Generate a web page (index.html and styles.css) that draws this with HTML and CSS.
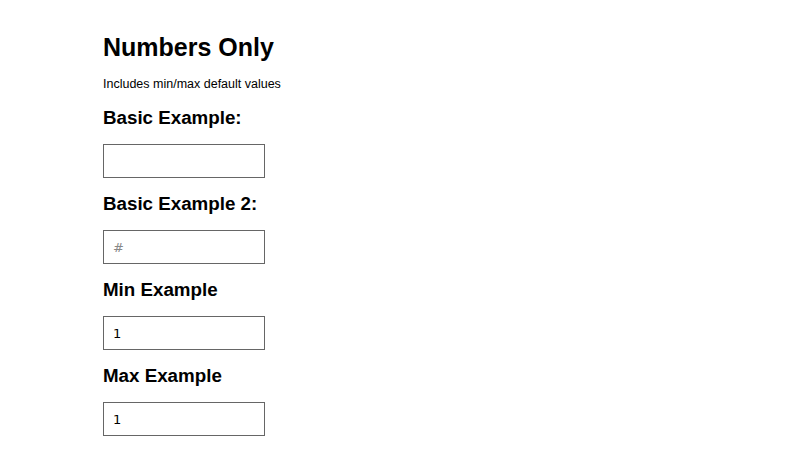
FILE: index.html
```html
<!DOCTYPE html>
<html lang="en">
<head>
    <meta charset="UTF-8">
    <meta name="viewport" content="width=device-width, initial-scale=1.0">
    <title>Numbers Only</title>
    <link rel="stylesheet" href="styles.css">
</head>
<body>

<div class="container">
    <h1>Numbers Only</h1>
    <p class="intro">Includes min/max default values</p>

    <div class="form-group">
        <label for="basic">Basic Example:</label>
        <input type="text" id="basic">
    </div>
    <div class="form-group">
        <label for="basic2">Basic Example 2:</label>
        <input type="text" id="basic2" placeholder="#">
    </div>
    <div class="form-group">
        <label for="min">Min Example</label>
        <input type="text" id="min" value="1">
    </div>
    <div class="form-group">
        <label for="max">Max Example</label>
        <input type="text" id="max" value="1">
    </div>
</div>

</body>
</html>
```

FILE: styles.css
```css
body {
    font-family: "Liberation Sans", Arial, sans-serif;
    font-size: 12.5px;
    margin: 0;
    padding: 0;
    background-color: #fff;
    color: #000;
}

.container {
    padding: 33px 103px 0;
}

h1 {
    font-size: 2em;
    margin: 0;
    line-height: 29px;
}

.intro {
    margin: 14px 0 0;
    line-height: 16px;
}

.form-group {
    margin-top: 15px;
}

label {
    display: block;
    font-size: 1.5em;
    font-weight: bold;
    line-height: 22px;
    margin-bottom: 15px;
}

input[type="text"] {
    display: block;
    width: 162px;
    height: 34px;
    box-sizing: border-box;
    padding: 0 9px;
    border: 1px solid #666;
    border-radius: 0;
    font-family: "DejaVu Sans", sans-serif;
    font-size: 13px;
    color: #000;
    margin: 0;
}

input::placeholder {
    color: #888;
}
```
